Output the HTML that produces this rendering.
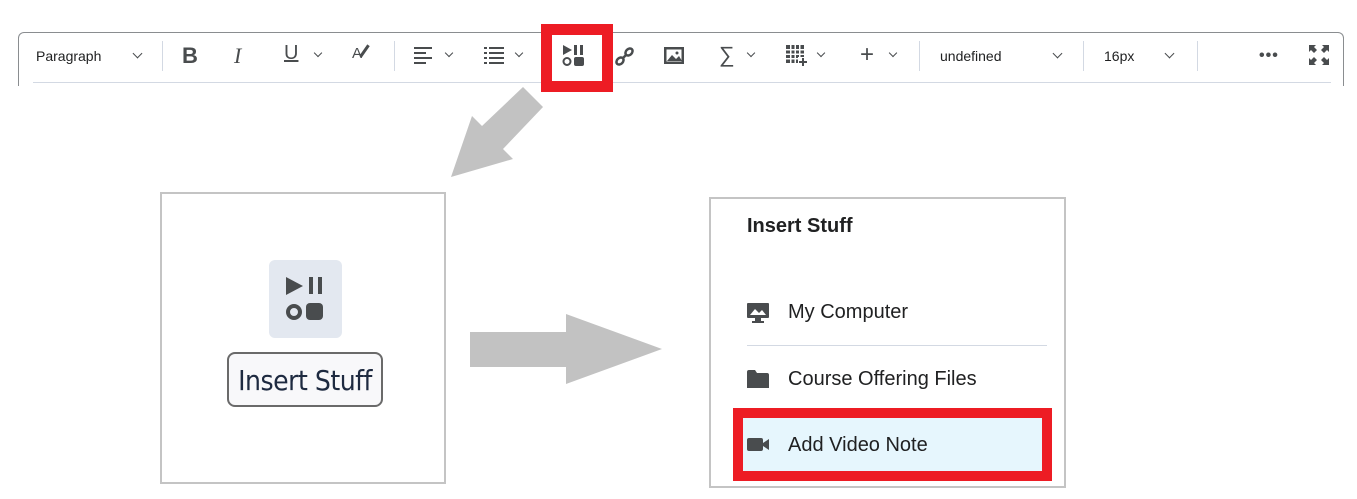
<!DOCTYPE html>
<html><head><style>
*{margin:0;padding:0;box-sizing:border-box}
body{width:1357px;height:499px;background:#fff;position:relative;overflow:hidden;font-family:"Liberation Sans",sans-serif;color:#202122}
.a{position:absolute}
.tb{left:18px;top:32px;width:1326px;height:54px;border:1px solid #8a8d90;border-bottom:none;border-radius:6px 6px 0 0}
.sep{position:absolute;top:41px;width:1px;height:30px;background:#d3d9e3}
.t{position:absolute;font-size:14px;color:#202122;top:48px}
.chev{position:absolute;top:50px;width:7px;height:7px;border-right:1.5px solid #494c4e;border-bottom:1.5px solid #494c4e;transform:rotate(45deg)}
.ic{position:absolute;color:#494c4e}
.mi{position:absolute;left:788px;font-size:20px;color:#202122}
</style></head><body>
<div class="a tb"></div>
<div class="a" style="left:33px;top:82px;width:1298px;height:1px;background:#d3d9e3"></div>
<div class="t" style="left:36px;top:48px">Paragraph</div>
<div class="chev" style="left:134px"></div>
<div class="sep" style="left:162px"></div>
<div class="ic" style="left:182px;top:43px;font:bold 22px 'Liberation Sans'">B</div>
<div class="ic" style="left:234px;top:43px;font:italic 22px 'Liberation Serif'">I</div>
<div class="ic" style="left:284px;top:42px;font:20px 'Liberation Sans';text-decoration:underline">U</div>
<div class="chev" style="left:315px;width:6px;height:6px"></div>
<div class="ic" style="left:352px;top:44px;font:15px 'Liberation Sans'">A<span style="display:inline-block;width:3px;height:14px;background:#494c4e;transform:rotate(35deg);margin-left:1px"></span></div>
<div class="sep" style="left:394px"></div>
<svg class="a" style="left:414px;top:46px" width="20" height="20"><g fill="#494c4e"><rect x="0" y="1" width="18" height="2"/><rect x="0" y="6" width="12" height="2"/><rect x="0" y="11" width="18" height="2"/><rect x="0" y="16" width="12" height="2"/></g></svg>
<div class="chev" style="left:446px;width:6px;height:6px"></div>
<svg class="a" style="left:484px;top:46px" width="22" height="20"><g fill="#494c4e"><rect x="0" y="1" width="3" height="2"/><rect x="5" y="1" width="15" height="2"/><rect x="0" y="6" width="3" height="2"/><rect x="5" y="6" width="15" height="2"/><rect x="0" y="11" width="3" height="2"/><rect x="5" y="11" width="15" height="2"/><rect x="0" y="16" width="3" height="2"/><rect x="5" y="16" width="15" height="2"/></g></svg>
<div class="chev" style="left:516px;width:6px;height:6px"></div>
<svg class="a" style="left:562px;top:45px" width="24" height="22"><g fill="#494c4e"><path d="M1 0 L10 5 L1 10Z"/><rect x="12" y="0" width="3" height="10"/><rect x="18" y="0" width="3" height="10"/><circle cx="5" cy="16.5" r="3.5" fill="none" stroke="#494c4e" stroke-width="2"/><rect x="12" y="12" width="10" height="9" rx="2"/></g></svg>
<div class="a" style="left:541px;top:24px;width:72px;height:68px;border:11px solid #ed1c24"></div>
<svg class="a" style="left:614px;top:46px" width="22" height="22"><g fill="none" stroke="#494c4e" stroke-width="2.5"><ellipse cx="15" cy="6" rx="4" ry="3" transform="rotate(-45 15 6)"/><ellipse cx="6" cy="15" rx="4" ry="3" transform="rotate(-45 6 15)"/><path d="M8 13 L13 8"/></g></svg>
<svg class="a" style="left:664px;top:47px" width="22" height="18"><rect x="0" y="0" width="20" height="17" fill="#494c4e"/><rect x="2.5" y="2.5" width="15" height="12" fill="#fff"/><path d="M3 14 L8 8 L12 12 L15 9 L18 14Z" fill="#494c4e"/><circle cx="13" cy="6" r="1.5" fill="#494c4e"/></svg>
<div class="ic" style="left:719px;top:42px;font:22px 'Liberation Sans'">∑</div>
<div class="chev" style="left:748px;width:6px;height:6px"></div>
<svg class="a" style="left:786px;top:45px" width="22" height="22"><g fill="#494c4e"><rect x="0" y="0" width="18" height="18"/></g><g fill="#fff"><rect x="4" y="0" width="1.5" height="18"/><rect x="8.5" y="0" width="1.5" height="18"/><rect x="13" y="0" width="1.5" height="18"/><rect x="0" y="4" width="18" height="1.5"/><rect x="0" y="8.5" width="18" height="1.5"/><rect x="0" y="13" width="18" height="1.5"/><rect x="12" y="12" width="10" height="10"/></g><path d="M17 13v8M13 17h8" stroke="#494c4e" stroke-width="2"/></svg>
<div class="chev" style="left:818px;width:6px;height:6px"></div>
<div class="ic" style="left:860px;top:41px;font:24px 'Liberation Sans'">+</div>
<div class="chev" style="left:890px;width:6px;height:6px"></div>
<div class="sep" style="left:919px"></div>
<div class="t" style="left:940px">undefined</div>
<div class="chev" style="left:1054px"></div>
<div class="sep" style="left:1083px"></div>
<div class="t" style="left:1104px">16px</div>
<div class="chev" style="left:1166px"></div>
<div class="sep" style="left:1197px"></div>
<div class="ic" style="left:1259px;top:47px;font:bold 16px 'Liberation Sans';letter-spacing:1px">•••</div>
<svg class="a" style="left:1309px;top:45px" width="20" height="20"><g fill="#494c4e"><path d="M0 0h7l-2 2 3 3-3 3-3-3-2 2z"/><path d="M20 0v7l-2-2-3 3-3-3 3-3-2-2z"/><path d="M0 20v-7l2 2 3-3 3 3-3 3 2 2z"/><path d="M20 20h-7l2-2-3-3 3-3 3 3 2-2z"/></g></svg>

<svg class="a" style="left:0;top:0" width="1357" height="499"><polygon fill="#c2c2c2" points="451,177 472,116 482,126 523,87 543,107 503,149 513,159"/><polygon fill="#c2c2c2" points="470,332 566,332 566,314 662,349 566,384 566,367 470,367"/></svg>

<div class="a" style="left:160px;top:192px;width:286px;height:292px;border:2px solid #c4c4c4"></div>
<div class="a" style="left:269px;top:260px;width:73px;height:78px;background:#e3e8f0;border-radius:6px"></div>
<svg class="a" style="left:285px;top:277px" width="44" height="46"><g fill="#494c4e"><path d="M1 0 L18 9 L1 18Z"/><rect x="24" y="0" width="4" height="17"/><rect x="33" y="0" width="4" height="17"/><circle cx="9" cy="35" r="6" fill="none" stroke="#494c4e" stroke-width="4"/><rect x="21" y="26" width="17" height="17" rx="4"/></g></svg>
<div class="a" style="left:227px;top:352px;width:156px;height:55px;border:2px solid #6a6a6a;border-radius:8px;background:#f8f8fa;font:28px 'DejaVu Sans Condensed','Liberation Sans Narrow',sans-serif;color:#1e2a40;text-align:center;line-height:54px;letter-spacing:-0.5px">Insert Stuff</div>

<div class="a" style="left:709px;top:197px;width:357px;height:291px;border:2px solid #c4c4c4"></div>
<div class="a" style="left:747px;top:215px;font:bold 20px 'Liberation Sans';color:#202122">Insert Stuff</div>
<svg class="a" style="left:747px;top:303px" width="24" height="22"><rect x="0" y="0" width="22" height="15" rx="1" fill="#494c4e"/><path d="M3 12 L8 6 L12 10 L15 7 L19 12Z" fill="#fff"/><rect x="8" y="15" width="6" height="3" fill="#494c4e"/><rect x="5" y="18" width="12" height="2" fill="#494c4e"/></svg>
<div class="mi" style="top:301px">My Computer</div>
<div class="a" style="left:747px;top:345px;width:300px;height:1px;background:#d3d9e3"></div>
<svg class="a" style="left:747px;top:370px" width="24" height="20"><path d="M0 2 Q0 0 2 0 H8 L10 3 H20 Q22 3 22 5 V18 H0Z" fill="#494c4e"/></svg>
<div class="mi" style="top:368px">Course Offering Files</div>
<div class="a" style="left:733px;top:408px;width:319px;height:73px;border:10px solid #ed1c24;background:#e6f6fd"></div>
<svg class="a" style="left:747px;top:438px" width="24" height="14"><rect x="0" y="0" width="16" height="13" rx="2" fill="#494c4e"/><path d="M16 5 L22 1 V12 L16 8Z" fill="#494c4e"/></svg>
<div class="mi" style="top:434px">Add Video Note</div>
</body></html>
